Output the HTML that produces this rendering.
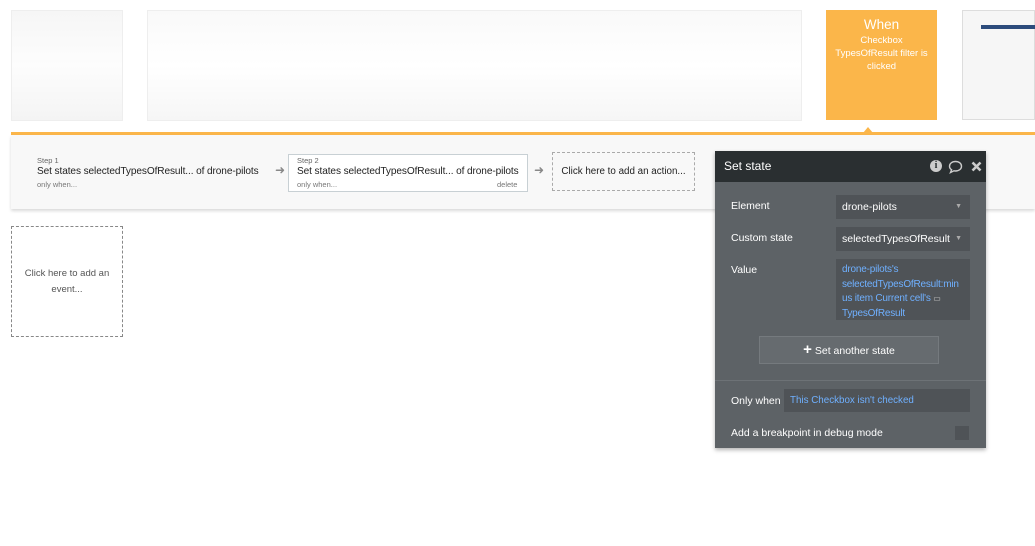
<!DOCTYPE html><html><head><style>
body{margin:0;width:1035px;height:546px;background:#fff;position:relative;overflow:hidden;font-family:"Liberation Sans",sans-serif}
.a{position:absolute}
.lbl{color:#fff;font-size:10.5px}
.fld{background:#4f5357;color:#fff;font-size:10.5px;padding:0 6px;box-sizing:border-box;white-space:nowrap}
</style></head><body>
<div class="a" style="left:11px;top:10px;width:112px;height:111px;background:linear-gradient(#f6f6f6,#fdfdfd,#f4f4f4);border:1px solid #eee;box-sizing:border-box"></div>
<div class="a" style="left:147px;top:10px;width:655px;height:111px;background:linear-gradient(#f9f9f9,#fff,#f6f6f6);border:1px solid #eee;box-sizing:border-box"></div>
<div class="a" style="left:826px;top:10px;width:111px;height:110px;background:#fbb64a;color:#fff;text-align:center;font-size:9.5px;line-height:13px">
<div style="font-size:13.5px;margin-top:8px;margin-bottom:3px">When</div>Checkbox<br>TypesOfResult filter is<br>clicked</div>
<div class="a" style="left:962px;top:10px;width:73px;height:110px;background:#f6f6f6;border:1px solid #ddd;box-sizing:border-box"><div style="margin:14px 0 0 18px;width:55px;height:4px;background:#2d4c7c"></div></div>
<div class="a" style="left:11px;top:132px;width:1024px;height:3px;background:#fbb64a"></div>
<div class="a" style="left:863px;top:127px;width:0;height:0;border-left:5px solid transparent;border-right:5px solid transparent;border-bottom:6px solid #fbb64a"></div>
<div class="a" style="left:11px;top:135px;width:1024px;height:74px;background:#f8f8f8;box-shadow:0 2px 3px rgba(0,0,0,.15)"></div>
<div class="a" style="left:37px;top:156px;font-size:7.5px;color:#666">Step 1</div>
<div class="a" style="left:37px;top:166px;font-size:10.1px;color:#222;letter-spacing:-0.1px">Set states selectedTypesOfResult... of drone-pilots</div>
<div class="a" style="left:37px;top:180px;font-size:7.5px;color:#777">only when...</div>
<div class="a" style="left:275px;top:163px;color:#888;font-size:12px">➜</div>
<div class="a" style="left:288px;top:154px;width:240px;height:38px;border:1px solid #c8d0d4;background:#fff;box-sizing:border-box"></div>
<div class="a" style="left:297px;top:156px;font-size:7.5px;color:#666">Step 2</div>
<div class="a" style="left:297px;top:166px;font-size:10.1px;color:#222;letter-spacing:-0.1px">Set states selectedTypesOfResult... of drone-pilots</div>
<div class="a" style="left:297px;top:180px;font-size:7.5px;color:#777">only when...</div>
<div class="a" style="left:497px;top:180px;font-size:7.5px;color:#777">delete</div>
<div class="a" style="left:534px;top:163px;color:#888;font-size:12px">➜</div>
<div class="a" style="left:552px;top:152px;width:143px;height:39px;border:1px dashed #aaa;font-size:9.8px;color:#222;line-height:37px;text-align:center;box-sizing:border-box">Click here to add an action...</div>
<div class="a" style="left:11px;top:226px;width:112px;height:111px;border:1px dashed #888;box-sizing:border-box;font-size:9.5px;color:#555;text-align:center;padding-top:39px;line-height:16px">Click here to add an<br>event...</div>
<div class="a" style="left:715px;top:151px;width:271px;height:297px;background:#5d6266;box-shadow:0 2px 4px rgba(0,0,0,.3)">
<div style="height:31px;background:#2a2f31;color:#fff;font-size:12px;line-height:31px;padding-left:9px;position:relative">Set state
<span style="position:absolute;left:215px;top:9px;width:12px;height:12px;border-radius:50%;background:#ccc;color:#2a2f31;font-size:10px;line-height:12px;text-align:center;font-weight:bold;font-family:'Liberation Serif',serif">i</span>
<svg style="position:absolute;left:233px;top:9px" width="15" height="14" viewBox="0 0 15 14"><path d="M7.5 1.5C4 1.5 1.5 3.6 1.5 6.2c0 1.5.8 2.7 2.1 3.5L2.5 12.5l3.4-1.7c.5.1 1 .2 1.6.2 3.5 0 6-2.1 6-4.8s-2.5-4.7-6-4.7z" fill="none" stroke="#ccc" stroke-width="1.4"/></svg>
<svg style="position:absolute;left:256px;top:10px" width="11" height="11" viewBox="0 0 11 11"><path d="M1.5 1.5l8 8M9.5 1.5l-8 8" stroke="#ccc" stroke-width="2.6"/></svg></div>
<div class="a lbl" style="left:16px;top:49px">Element</div>
<div class="a fld" style="left:121px;top:44px;width:134px;height:24px;line-height:24px">drone-pilots<span style="position:absolute;right:8px;font-size:7px;color:#aaa">▼</span></div>
<div class="a lbl" style="left:16px;top:81px">Custom state</div>
<div class="a fld" style="left:121px;top:76px;width:134px;height:24px;line-height:24px">selectedTypesOfResult<span style="position:absolute;right:8px;font-size:7px;color:#aaa">▼</span></div>
<div class="a lbl" style="left:16px;top:113px">Value</div>
<div class="a fld" style="left:121px;top:108px;width:134px;height:61px;color:#6fb0ff;font-size:10px;line-height:14.5px;padding-top:4px;letter-spacing:-0.2px">drone-pilots's<br>selectedTypesOfResult:min<br>us item Current cell's <span style="font-size:8px;color:#ccc">▭</span><br>TypesOfResult</div>
<div class="a" style="left:44px;top:185px;width:178px;height:26px;background:#666b6f;border:1px solid #757a7e;color:#fff;font-size:10.5px;line-height:26px;text-align:center"><b style="font-size:15px">+</b> Set another state</div>
<div class="a" style="left:0;top:229px;width:271px;height:1px;background:#6d7276"></div>
<div class="a lbl" style="left:16px;top:244px">Only when</div>
<div class="a fld" style="left:69px;top:238px;width:186px;height:23px;line-height:23px;color:#6fb0ff;font-size:9.8px">This Checkbox isn't checked</div>
<div class="a lbl" style="left:16px;top:276px">Add a breakpoint in debug mode</div>
<div class="a" style="left:240px;top:275px;width:14px;height:14px;background:#4f5357"></div>
</div>
</body></html>
